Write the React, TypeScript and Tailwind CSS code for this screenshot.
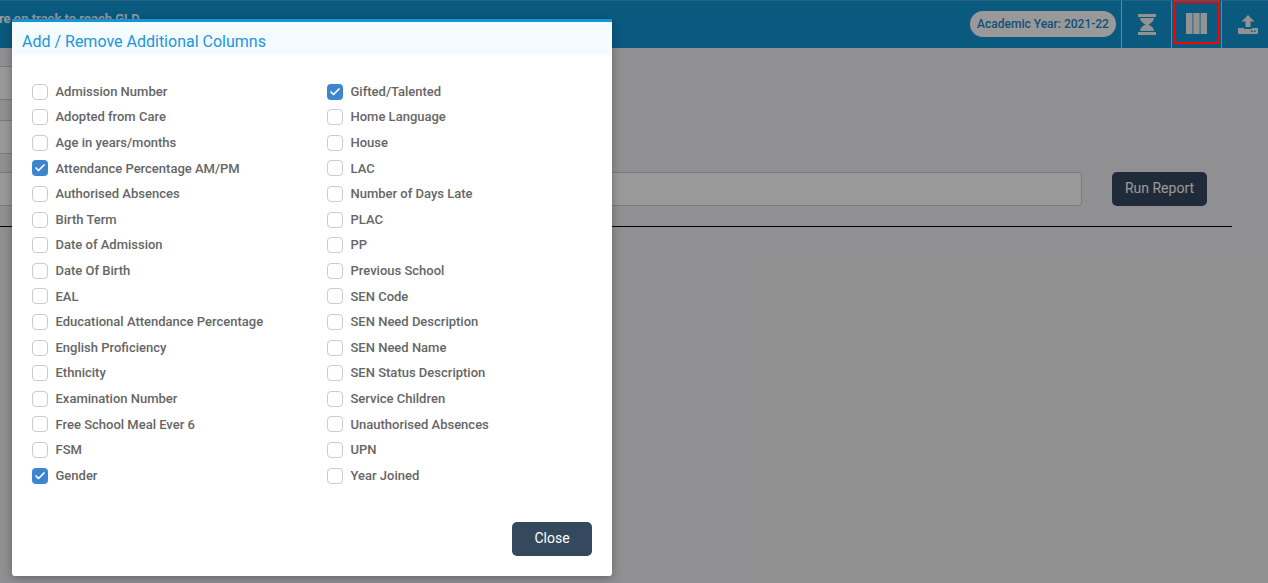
import { Check } from "lucide-react";

const leftColumns = [
  { label: "Admission Number" },
  { label: "Adopted from Care" },
  { label: "Age in years/months" },
  { label: "Attendance Percentage AM/PM", checked: true },
  { label: "Authorised Absences" },
  { label: "Birth Term" },
  { label: "Date of Admission" },
  { label: "Date Of Birth" },
  { label: "EAL" },
  { label: "Educational Attendance Percentage" },
  { label: "English Proficiency" },
  { label: "Ethnicity" },
  { label: "Examination Number" },
  { label: "Free School Meal Ever 6" },
  { label: "FSM" },
  { label: "Gender", checked: true },
];

const rightColumns = [
  { label: "Gifted/Talented", checked: true },
  { label: "Home Language" },
  { label: "House" },
  { label: "LAC" },
  { label: "Number of Days Late" },
  { label: "PLAC" },
  { label: "PP" },
  { label: "Previous School" },
  { label: "SEN Code" },
  { label: "SEN Need Description" },
  { label: "SEN Need Name" },
  { label: "SEN Status Description" },
  { label: "Service Children" },
  { label: "Unauthorised Absences" },
  { label: "UPN" },
  { label: "Year Joined" },
];

function HourglassIcon() {
  return (
    <svg width="18" height="21" viewBox="0 0 18 21" fill="currentColor">
      <rect x="0" y="0" width="18" height="3" />
      <rect x="0" y="18" width="18" height="3" />
      <path d="M2 4h14c0 3-2.500 5-5.500 6.500C13.500 12 16 14 16 17H2c0-3 2.500-5 5.500-6.500C4.500 9 2 7 2 4z" />
    </svg>
  );
}

function ColumnsIcon() {
  return (
    <svg width="21" height="21" viewBox="0 0 21 21" fill="currentColor">
      <rect x="0" y="0" width="6.500" height="21" />
      <rect x="7.300" y="0" width="6.400" height="21" />
      <rect x="14.500" y="0" width="6.500" height="21" />
    </svg>
  );
}

function UploadIcon() {
  return (
    <svg width="20" height="19" viewBox="0 0 20 19" fill="currentColor">
      <path d="M10 0l6.500 6.500h-4V12h-5V6.500h-4z" />
      <path
        fillRule="evenodd"
        d="M0 13h6v1h8v-1h6v5a1 1 0 0 1-1 1H1a1 1 0 0 1-1-1zM13 15.500h1.500V17H13zM16 15.500h1.500V17H16z"
      />
    </svg>
  );
}

function ColumnOption({ label, checked }: { label: string; checked?: boolean }) {
  return (
    <label className="flex h-[25.6px] items-center gap-[7.5px]">
      {checked ? (
        <span className="flex h-4 w-4 items-center justify-center rounded-[4px] bg-[#3d85cf] text-white">
          <Check size={12} strokeWidth={3.5} />
        </span>
      ) : (
        <span className="h-4 w-4 rounded-[4px] border border-[#cccccc] bg-white" />
      )}
      <span className="text-[13px] font-medium text-[#666666]">{label}</span>
    </label>
  );
}

export default function App() {
  return (
    <div className="relative h-[583px] w-[1268px] overflow-hidden bg-[#f1f1f3] font-['Roboto',sans-serif]">
      <header className="flex h-12 items-stretch border-t border-[#3aa8dc] bg-[#1296d5]">
        <div className="ml-[-8px] mt-[8px] flex-1 text-[13px] font-bold text-white">
          are on track to reach GLD
        </div>
        <div className="flex items-center pb-[2px] pr-[5px]">
          <span className="flex h-[26px] w-[146px] items-center justify-center rounded-full bg-white text-xs font-medium text-[#1b87c9]">
            Academic Year: 2021-22
          </span>
        </div>
        <div className="flex w-[50px] items-center justify-center border-l border-white/70 pb-px text-[#f3f3f5]">
          <HourglassIcon />
        </div>
        <div className="flex w-[50px] items-center justify-center border-l border-white/70 pb-[3px] text-[#f3f3f5]">
          <ColumnsIcon />
        </div>
        <div className="flex w-[47px] items-center justify-center border-l border-white/70 pb-px pl-[5px] text-[#f3f3f5]">
          <UploadIcon />
        </div>
      </header>

      <main className="pt-[18px]">
        <div className="flex w-[400px] flex-col gap-5">
          <div className="h-[34px] border-y border-[#cccccc] bg-white" />
          <div className="h-[34px] border-y border-[#cccccc] bg-white" />
        </div>
        <div className="mt-[18px] flex items-center">
          <input className="h-[34px] w-[1082px] rounded-r border border-l-0 border-[#cccccc] bg-white" />
          <button className="ml-[30px] h-[34px] w-[95px] rounded-[5px] bg-[#34495e] pb-[2px] text-sm text-white">
            Run Report
          </button>
        </div>
        <div className="mt-5 h-px w-[1232px] bg-black" />
      </main>

      <div className="absolute inset-0 bg-black/40" />

      <div className="absolute left-[1173px] top-px h-[43px] w-[47px] border-2 border-[#ff0000]" />

      <div className="absolute left-3 top-[19px] flex h-[557px] w-[600px] flex-col rounded-b-[3px] bg-white shadow-[0_2px_10px_rgba(0,0,0,0.3)]">
        <div className="flex h-[36px] items-center border-t-[3px] border-[#1296d5] bg-[#f3fbff] px-[10px] pt-[7px] text-base text-[#2196d9]">
          Add / Remove Additional Columns
        </div>
        <div className="grid grid-cols-[295px_1fr] px-5 pt-[23.850px]">
          <div>
            {leftColumns.map((c) => (
              <ColumnOption key={c.label} label={c.label} checked={c.checked} />
            ))}
          </div>
          <div>
            {rightColumns.map((c) => (
              <ColumnOption key={c.label} label={c.label} checked={c.checked} />
            ))}
          </div>
        </div>
        <div className="mt-[33.550px] flex justify-end px-5">
          <button className="h-[34px] w-20 rounded-[5px] bg-[#34495e] pb-[2px] text-sm text-white">
            Close
          </button>
        </div>
      </div>
    </div>
  );
}
